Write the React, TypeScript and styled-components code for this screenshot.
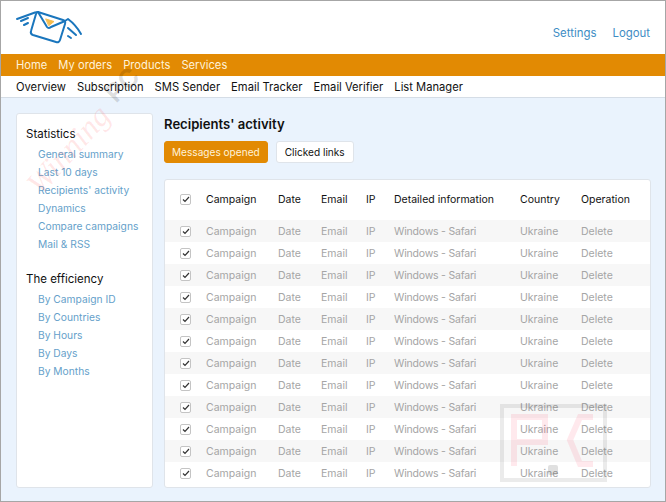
import React from 'react';
import styled, { createGlobalStyle } from 'styled-components';

const GlobalStyle = createGlobalStyle`
  html, body {
    margin: 0;
    padding: 0;
    background: #a6a6a6;
  }
  * {
    box-sizing: border-box;
  }
`;

const statistics = ['General summary', 'Last 10 days', "Recipients' activity", 'Dynamics', 'Compare campaigns', 'Mail & RSS'];
const efficiency = ['By Campaign ID', 'By Countries', 'By Hours', 'By Days', 'By Months'];
const subNav = ['Overview', 'Subscription', 'SMS Sender', 'Email Tracker', 'Email Verifier', 'List Manager'];
const mainNav = ['Home', 'My orders', 'Products', 'Services'];
const columns = ['Campaign', 'Date', 'Email', 'IP', 'Detailed information', 'Country', 'Operation'];
const rows = Array.from({ length: 12 }, (_, i) => i);

function Logo() {
  return (
    <svg width="84" height="46" viewBox="1 1 84 46" fill="none" stroke="#1a76bd" strokeWidth="2" strokeLinecap="round" strokeLinejoin="round">
      <path d="M38 12 L63 20 Q66 21 65 24 L60 40 Q59 43 56 42 L33 35 Q30 34 31 31 L36 14 Q36.500 12 38 12 Z" />
      <path d="M38 12 L47 27 Q48.500 29 51 27 L65 21" />
      <path d="M17 19 L35 12.500 Q37 12 38 12" />
      <path d="M21 21 L28 18" />
      <path d="M24 25 L28 23" />
      <path d="M65 21 L68 19 Q76 25 81 34" />
      <path d="M68 28 L76 35" />
      <path d="M68 36 L71 38" />
      <path d="M46 19 L54 21.500 L49 25.500 Z" fill="#f6bd4e" stroke="#f6bd4e" strokeWidth="1" />
    </svg>
  );
}

function Check() {
  return (
    <svg width="8" height="7" viewBox="0 0 8 7" fill="none" stroke="#333" strokeWidth="1.2">
      <path d="M1 3.500 L3 5.500 L7 1" />
    </svg>
  );
}

export default function App() {
  return (
    <>
      <GlobalStyle />
      <Frame>
        <Header>
          <LogoBox><Logo /></LogoBox>
          <HeaderLinks>
            <HeaderLink>Settings</HeaderLink>
            <HeaderLink>Logout</HeaderLink>
          </HeaderLinks>
        </Header>
        <MainNav>
          {mainNav.map((item) => <MainNavItem key={item}>{item}</MainNavItem>)}
        </MainNav>
        <SubNav>
          {subNav.map((item) => <SubNavItem key={item}>{item}</SubNavItem>)}
        </SubNav>
        <Content>
          <Sidebar>
            <SideTitle>Statistics</SideTitle>
            <SideList>
              {statistics.map((item) => <SideLink key={item}>{item}</SideLink>)}
            </SideList>
            <SideTitle>The efficiency</SideTitle>
            <SideList>
              {efficiency.map((item) => <SideLink key={item}>{item}</SideLink>)}
            </SideList>
          </Sidebar>
          <Main>
            <Title>Recipients' activity</Title>
            <Tabs>
              <Tab $active>Messages opened</Tab>
              <Tab>Clicked links</Tab>
            </Tabs>
            <Card>
              <HeadRow>
                <CheckBox><Check /></CheckBox>
                {columns.map((c) => <span key={c}>{c}</span>)}
              </HeadRow>
              {rows.map((r) => (
                <Row key={r} $striped={r % 2 === 0}>
                  <CheckBox><Check /></CheckBox>
                  <span>Campaign</span>
                  <span>Date</span>
                  <span>Email</span>
                  <span>IP</span>
                  <DetailCell>Windows - Safari</DetailCell>
                  <span>Ukraine</span>
                  <span>Delete</span>
                </Row>
              ))}
            </Card>
          </Main>
        </Content>
        <WatermarkText>Winning</WatermarkText>
        <WatermarkGray>PC</WatermarkGray>
        <WatermarkBox>
          <svg width="107" height="78" viewBox="0 0 107 78" fill="none">
            <rect x="2" y="2" width="103" height="74" stroke="#000" strokeOpacity="0.08" strokeWidth="4" />
            <path d="M14 62 V13 H45 V38 H14" stroke="#ff2a4a" strokeOpacity="0.1" strokeWidth="6" />
            <path d="M93 13 H80 L70 36 L80 60 H93" stroke="#ff2a4a" strokeOpacity="0.1" strokeWidth="6" />
            <rect x="48" y="61" width="10" height="10" rx="2" fill="#000" fillOpacity="0.12" />
          </svg>
        </WatermarkBox>
      </Frame>
    </>
  );
}

const Frame = styled.div`
  position: relative;
  width: 664px;
  height: 500px;
  margin: 1px 0 0 1px;
  overflow: hidden;
  display: flex;
  flex-direction: column;
  background: #eaf3fd;
  font-family: "Inter", "Liberation Sans", sans-serif;
  font-size: 11px;
`;

const Header = styled.header`
  height: 53px;
  background: #fff;
  display: flex;
  justify-content: space-between;
  align-items: center;
  padding: 0 15px 0 0;
`;

const LogoBox = styled.div`
  display: flex;
  align-self: flex-start;
`;

const HeaderLinks = styled.div`
  display: flex;
  gap: 16px;
  padding-top: 11px;
`;

const HeaderLink = styled.a`
  color: #3d8cc4;
  font-size: 11.4px;
`;

const MainNav = styled.nav`
  height: 22px;
  background: #e28a03;
  display: flex;
  align-items: center;
  gap: 11px;
  padding-left: 15px;
`;

const MainNavItem = styled.a`
  color: #fff2d9;
  font-size: 11.2px;
`;

const SubNav = styled.nav`
  height: 22px;
  background: #fff;
  border-bottom: 1px solid #d5dde6;
  display: flex;
  align-items: center;
  gap: 11px;
  padding-left: 15px;
`;

const SubNavItem = styled.a`
  color: #111;
  font-size: 11.2px;
`;

const Content = styled.div`
  flex: 1;
  display: flex;
  gap: 11px;
  padding: 15px 14px 13px 15px;
`;

const Sidebar = styled.aside`
  width: 137px;
  background: #fff;
  border: 1px solid #dfe4ea;
  border-radius: 3px;
  padding: 11px 9px;
`;

const SideTitle = styled.div`
  color: #111;
  font-size: 11.5px;
  line-height: 18px;
  margin-bottom: 2px;
`;

const SideList = styled.div`
  display: flex;
  flex-direction: column;
  padding-left: 12px;
  margin-bottom: 17px;
`;

const SideLink = styled.a`
  color: #659fca;
  font-size: 10.25px;
  line-height: 18px;
  white-space: nowrap;
`;

const Main = styled.main`
  flex: 1;
  display: flex;
  flex-direction: column;
  min-width: 0;
`;

const Title = styled.h1`
  margin: 1px 0 7px;
  font-size: 13.1px;
  line-height: 20px;
  font-weight: 600;
  color: #111;
`;

const Tabs = styled.div`
  display: flex;
  gap: 8px;
  margin-bottom: 16px;
`;

const Tab = styled.button<{ $active?: boolean }>`
  height: 22px;
  min-width: 78px;
  padding: 0 7px;
  border-radius: 3px;
  font: inherit;
  font-size: 10.1px;
  white-space: nowrap;
  border: 1px solid ${(p) => (p.$active ? '#e28a03' : '#dfe4ea')};
  background: ${(p) => (p.$active ? '#e28a03' : '#fff')};
  color: ${(p) => (p.$active ? '#fff2d9' : '#111')};
`;

const Card = styled.div`
  flex: 1;
  background: #fff;
  border: 1px solid #dfe4ea;
  border-radius: 3px;
`;

const rowGrid = `
  display: grid;
  grid-template-columns: 26px 72px 43px 45px 28px 126px 61px 1fr;
  align-items: center;
  padding-left: 15px;
  font-size: 10.5px;
  white-space: nowrap;
`;

const HeadRow = styled.div`
  ${rowGrid}
  height: 40px;
  padding-bottom: 2px;
  color: #111;
`;

const Row = styled.div<{ $striped: boolean }>`
  ${rowGrid}
  height: 22px;
  color: #a5a5a5;
  background: ${(p) => (p.$striped ? '#f7f7f7' : '#fff')};
`;

const DetailCell = styled.span`
  letter-spacing: -0.2px;
`;

const CheckBox = styled.span`
  width: 11px;
  height: 11px;
  background: #fff;
  border: 1px solid #c4c4c4;
  border-radius: 2px;
  display: flex;
  align-items: center;
  justify-content: center;
`;

const WatermarkText = styled.div`
  position: absolute;
  left: 14px;
  top: 130px;
  font-family: "Liberation Serif", serif;
  font-style: italic;
  font-size: 32px;
  color: rgba(255, 70, 70, 0.13);
  transform: rotate(-48deg);
  pointer-events: none;
`;

const WatermarkGray = styled.div`
  position: absolute;
  left: 103px;
  top: 68px;
  font-size: 26px;
  font-weight: 700;
  color: rgba(0, 0, 0, 0.12);
  transform: rotate(-45deg);
  pointer-events: none;
`;

const WatermarkBox = styled.div`
  position: absolute;
  left: 499px;
  top: 403px;
  pointer-events: none;
`;
